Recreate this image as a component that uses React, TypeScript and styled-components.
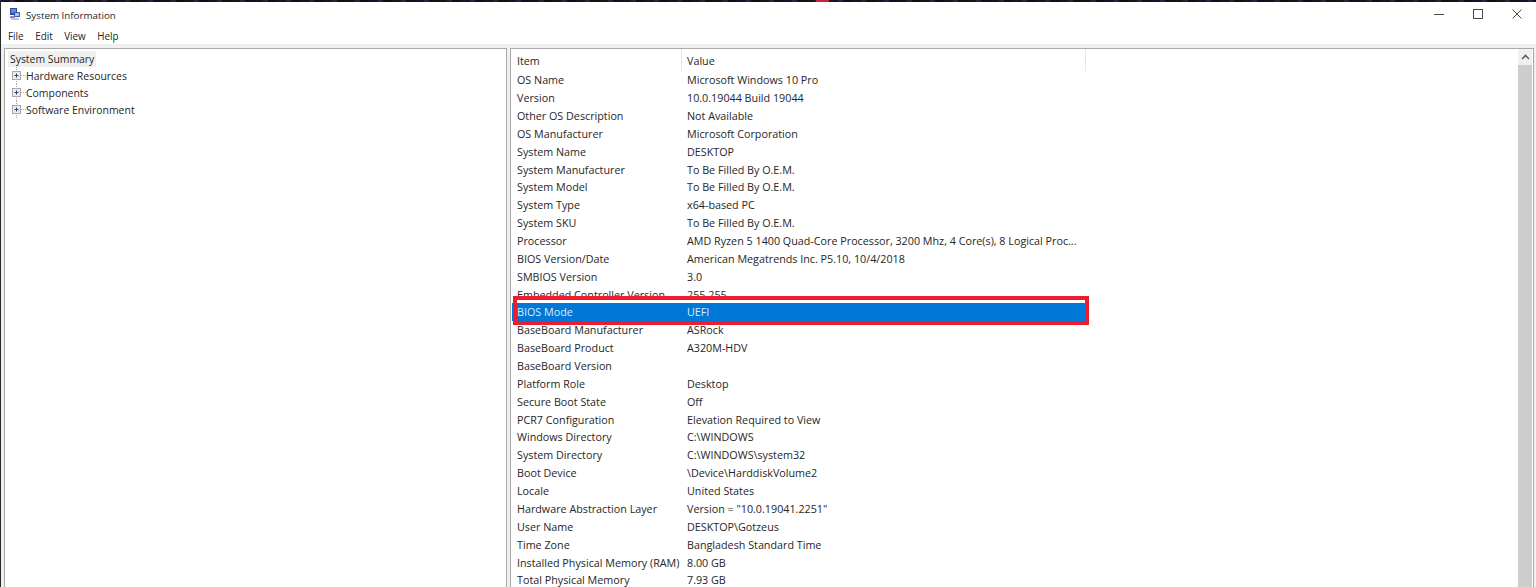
import React from 'react';
import styled, { createGlobalStyle } from 'styled-components';

const GlobalStyle = createGlobalStyle`
  html, body {
    margin: 0;
    padding: 0;
    height: 100%;
    overflow: hidden;
    background: #fff;
  }
  body {
    font-family: "Open Sans", "Noto Sans", "Liberation Sans", sans-serif;
    font-size: 10.75px;
    color: #262626;
  }
`;

const Window = styled.div`
  width: 1536px;
  height: 587px;
  display: flex;
  flex-direction: column;
  overflow: hidden;
  box-sizing: border-box;
  border-left: 1px solid #2a2a2a;
`;

const DesktopStrip = styled.div`
  height: 2px;
  flex: none;
  background: repeating-linear-gradient(90deg, #17141f 0 9px, #2a2140 9px 14px, #100e16 14px 23px);
  display: flex;
  padding-left: 815px;
`;

const TaskbarDot = styled.span`
  width: 13px;
  height: 2px;
  background: #c3263a;
`;

const TitleBar = styled.div`
  height: 25px;
  flex: none;
  display: flex;
  align-items: center;
  padding-left: 8px;
  background: #fff;
`;

const TitleText = styled.span`
  margin: 1px 0 0 5px;
  font-size: 9.8px;
`;

const WindowButtons = styled.div`
  margin-left: auto;
  display: flex;
  height: 100%;
`;

const WindowButton = styled.div`
  width: 39px;
  display: flex;
  align-items: center;
  justify-content: center;
  margin-top: -1px;
  color: #4a4a4a;
`;

const MenuBar = styled.div`
  height: 17px;
  flex: none;
  display: flex;
  align-items: center;
  gap: 11.5px;
  padding-left: 7px;
  background: #fff;
`;

const MenuItem = styled.span`
  font-size: 9.9px;
`;

const Panes = styled.div`
  flex: 1;
  min-height: 0;
  display: flex;
  gap: 3px;
  padding: 4px 2px 0 3px;
  background: #f0f0f0;
`;

const TreePane = styled.div`
  width: 503px;
  flex: none;
  box-sizing: border-box;
  background: #fff;
  border: 1px solid #a9a9a9;
  border-bottom: none;
  padding: 2px 0 0 3px;
`;

const TreeRoot = styled.div`
  width: 88px;
  height: 16px;
  line-height: 16px;
  padding-left: 2px;
  box-sizing: border-box;
  background: #f0f0f0;
  font-size: 10.4px;
  white-space: nowrap;
`;

const TreeNode = styled.div`
  height: 17px;
  display: flex;
  align-items: center;
  white-space: nowrap;
  font-size: 10.45px;
`;

const DetailPane = styled.div`
  flex: 1;
  min-width: 0;
  display: flex;
  background: #fff;
  border: 1px solid #a9a9a9;
  border-bottom: none;
`;

const Table = styled.div`
  flex: 1;
  min-width: 0;
  padding-left: 1px;
`;

const HeaderRow = styled.div`
  height: 22.3px;
  display: flex;
  align-items: center;
`;

const HeaderCell = styled.div<{ $width: number }>`
  width: ${p => p.$width}px;
  height: 100%;
  flex: none;
  box-sizing: border-box;
  padding-left: 5px;
  line-height: 25px;
  border-right: 1px solid #e5e5e5;
`;

const Row = styled.div<{ $selected?: boolean }>`
  position: relative;
  width: 573px;
  height: 17.86px;
  line-height: 19.6px;
  display: flex;
  white-space: nowrap;
  background: ${p => (p.$selected ? '#0078d7' : 'transparent')};
  color: ${p => (p.$selected ? '#dcebf8' : 'inherit')};
`;

const NameCell = styled.div`
  width: 170px;
  flex: none;
  box-sizing: border-box;
  padding-left: 5px;
`;

const ValueCell = styled.div`
  flex: 1;
  min-width: 0;
  padding-left: 5px;
`;

const Highlight = styled.div`
  position: absolute;
  left: 1px;
  right: -4px;
  top: -7px;
  bottom: -4px;
  border: 4px solid #ed1c2e;
  pointer-events: none;
`;

const Scrollbar = styled.div`
  width: 14px;
  flex: none;
  margin-right: 1px;
  display: flex;
  flex-direction: column;
  background: #f0f0f0;
`;

const ScrollArrow = styled.div`
  height: 16px;
  display: flex;
  align-items: center;
  justify-content: center;
`;

const ScrollThumb = styled.div`
  flex: 1;
  background: #cdcdcd;
`;

const rows: [string, string][] = [
  ['OS Name', 'Microsoft Windows 10 Pro'],
  ['Version', '10.0.19044 Build 19044'],
  ['Other OS Description', 'Not Available'],
  ['OS Manufacturer', 'Microsoft Corporation'],
  ['System Name', 'DESKTOP'],
  ['System Manufacturer', 'To Be Filled By O.E.M.'],
  ['System Model', 'To Be Filled By O.E.M.'],
  ['System Type', 'x64-based PC'],
  ['System SKU', 'To Be Filled By O.E.M.'],
  ['Processor', 'AMD Ryzen 5 1400 Quad-Core Processor, 3200 Mhz, 4 Core(s), 8 Logical Proc...'],
  ['BIOS Version/Date', 'American Megatrends Inc. P5.10, 10/4/2018'],
  ['SMBIOS Version', '3.0'],
  ['Embedded Controller Version', '255.255'],
  ['BIOS Mode', 'UEFI'],
  ['BaseBoard Manufacturer', 'ASRock'],
  ['BaseBoard Product', 'A320M-HDV'],
  ['BaseBoard Version', ''],
  ['Platform Role', 'Desktop'],
  ['Secure Boot State', 'Off'],
  ['PCR7 Configuration', 'Elevation Required to View'],
  ['Windows Directory', 'C:\\WINDOWS'],
  ['System Directory', 'C:\\WINDOWS\\system32'],
  ['Boot Device', '\\Device\\HarddiskVolume2'],
  ['Locale', 'United States'],
  ['Hardware Abstraction Layer', 'Version = "10.0.19041.2251"'],
  ['User Name', 'DESKTOP\\Gotzeus'],
  ['Time Zone', 'Bangladesh Standard Time'],
  ['Installed Physical Memory (RAM)', '8.00 GB'],
  ['Total Physical Memory', '7.93 GB'],
];

const treeNodes = ['Hardware Resources', 'Components', 'Software Environment'];

const AppIcon = () => (
  <svg width="12" height="13" viewBox="0 0 12 13">
    <rect x="1" y="0" width="7" height="7" fill="#34469c" />
    <rect x="2" y="1" width="5" height="4" fill="#6f86d8" />
    <rect x="5" y="4" width="6" height="5" fill="#2c5fb5" />
    <rect x="6" y="5" width="4" height="3" fill="#a9c4ee" />
    <rect x="1" y="8" width="5" height="2" fill="#7c8bb8" />
    <rect x="2" y="10" width="8" height="2" fill="#c4c4c4" />
  </svg>
);

const Expander = () => (
  <svg width="18" height="17" viewBox="0 0 18 17">
    <path d="M8.5 0V17" stroke="#a8a8a8" strokeDasharray="1 1" fill="none" />
    <path d="M13 8.5H18" stroke="#a8a8a8" strokeDasharray="1 1" fill="none" />
    <rect x="4.5" y="4.5" width="8" height="8" fill="#e6ebf4" stroke="#a3a9b5" />
    <path d="M6.5 8.5H10.5M8.5 6.5V10.5" stroke="#3c4250" fill="none" />
  </svg>
);

const App = () => {
  return (
    <Window>
      <GlobalStyle />
      <DesktopStrip>
        <TaskbarDot />
      </DesktopStrip>
      <TitleBar>
        <AppIcon />
        <TitleText>System Information</TitleText>
        <WindowButtons>
          <WindowButton>
            <svg width="10" height="10" viewBox="0 0 10 10">
              <path d="M0 5.5H10" stroke="currentColor" fill="none" />
            </svg>
          </WindowButton>
          <WindowButton>
            <svg width="10" height="10" viewBox="0 0 10 10">
              <rect x="0.5" y="0.5" width="9" height="9" stroke="currentColor" fill="none" />
            </svg>
          </WindowButton>
          <WindowButton>
            <svg width="10" height="10" viewBox="0 0 10 10">
              <path d="M0.5 0.5L9.5 9.5M9.5 0.5L0.5 9.5" stroke="currentColor" fill="none" />
            </svg>
          </WindowButton>
        </WindowButtons>
      </TitleBar>
      <MenuBar>
        <MenuItem>File</MenuItem>
        <MenuItem>Edit</MenuItem>
        <MenuItem>View</MenuItem>
        <MenuItem>Help</MenuItem>
      </MenuBar>
      <Panes>
        <TreePane>
          <TreeRoot>System Summary</TreeRoot>
          {treeNodes.map(node => (
            <TreeNode key={node}>
              <Expander />
              <span>{node}</span>
            </TreeNode>
          ))}
        </TreePane>
        <DetailPane>
          <Table>
            <HeaderRow>
              <HeaderCell $width={170}>Item</HeaderCell>
              <HeaderCell $width={404}>Value</HeaderCell>
            </HeaderRow>
            {rows.map(([name, value]) => (
              <Row key={name} $selected={name === 'BIOS Mode'}>
                <NameCell>{name}</NameCell>
                <ValueCell>{value}</ValueCell>
                {name === 'BIOS Mode' && <Highlight />}
              </Row>
            ))}
          </Table>
          <Scrollbar>
            <ScrollArrow>
              <svg width="9" height="6" viewBox="0 0 9 6">
                <path d="M1 5L4.5 1.5L8 5" stroke="#606060" strokeWidth="1.6" fill="none" />
              </svg>
            </ScrollArrow>
            <ScrollThumb />
          </Scrollbar>
        </DetailPane>
      </Panes>
    </Window>
  );
};

export default App;
